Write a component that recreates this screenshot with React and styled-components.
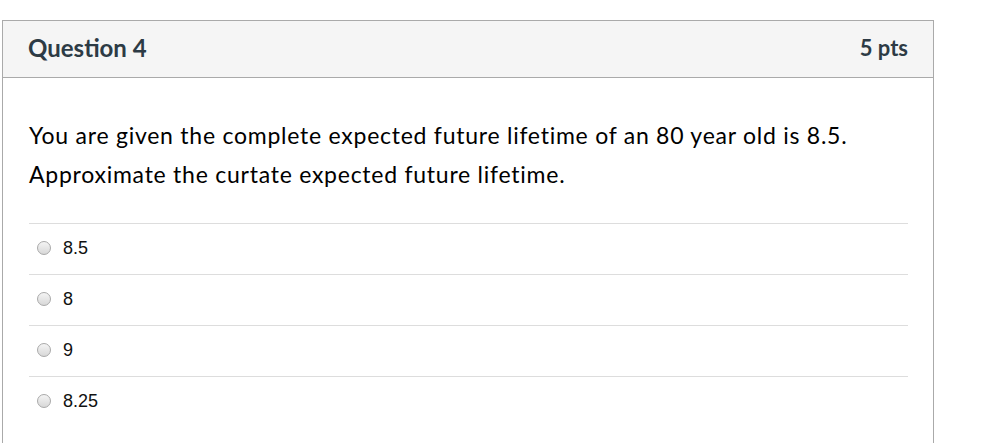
import React from "react";
import styled, { createGlobalStyle } from "styled-components";

const Global = createGlobalStyle`
  html, body { margin: 0; padding: 0; background: #fff; }
  body { font-family: Lato, "Noto Sans", sans-serif; }
`;

const Page = styled.div`
  padding: 20px 0 0 2px;
`;

const Card = styled.div`
  width: 932px;
  box-sizing: border-box;
  border: 1px solid #aaaaaa;
  border-bottom: none;
  min-height: 440px;
`;

const Header = styled.div`
  height: 57px;
  box-sizing: border-box;
  background: #f5f5f5;
  border-bottom: 1px solid #aaaaaa;
  display: flex;
  align-items: center;
  justify-content: space-between;
  padding: 0 25px 3px 25px;
`;

const Title = styled.h2`
  margin: 0;
  font-family: Lato, sans-serif;
  font-weight: 700;
  font-size: 24px;
  color: #2d3b45;
`;

const Points = styled.div`
  font-family: Lato, sans-serif;
  font-weight: 700;
  font-size: 22px;
  color: #2d3b45;
`;

const Body = styled.div`
  padding: 0 25px 0 26px;
`;

const QuestionText = styled.p`
  margin: 0;
  padding: 38px 0 29px;
  font-family: Lato, "Open Sans", sans-serif;
  font-size: 23px;
  letter-spacing: 0.75px;
  line-height: 39px;
  color: #000;
`;

const Answers = styled.div`
  display: flex;
  flex-direction: column;
`;

const Answer = styled.label`
  display: flex;
  align-items: center;
  height: 51px;
  box-sizing: border-box;
  border-top: 1px solid #dddddd;
  padding: 0 0 2px 8px;
  gap: 12px;
  font-family: "Liberation Sans", Arial, sans-serif;
  font-size: 18px;
  color: #111;
`;

const Radio = styled.span`
  width: 14px;
  height: 14px;
  box-sizing: border-box;
  border-radius: 50%;
  border: 1px solid #a9a9a9;
  background: linear-gradient(#f4f4f4, #d8d8d8);
  flex: none;
`;

const answers = ["8.5", "8", "9", "8.25"];

export default function App() {
  return (
    <>
      <Global />
      <Page>
        <Card>
          <Header>
            <Title>Question 4</Title>
            <Points>5 pts</Points>
          </Header>
          <Body>
            <QuestionText>
              You are given the complete expected future lifetime of an 80 year old is 8.5.
              <br />
              Approximate the curtate expected future lifetime.
            </QuestionText>
            <Answers>
              {answers.map((a) => (
                <Answer key={a}>
                  <Radio />
                  <span>{a}</span>
                </Answer>
              ))}
            </Answers>
          </Body>
        </Card>
      </Page>
    </>
  );
}
